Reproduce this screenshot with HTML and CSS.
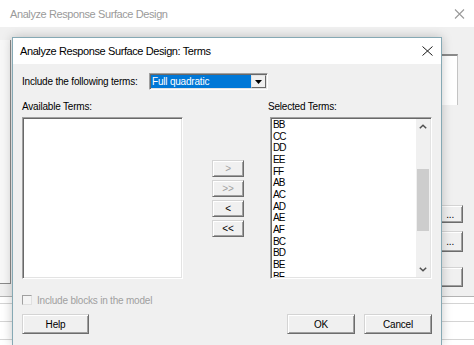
FILE: index.html
```html
<!DOCTYPE html>
<html lang="en">
<head>
  <meta charset="UTF-8">
  <title>Analyze Response Surface Design: Terms</title>
  <link rel="stylesheet" href="styles.css">
</head>
<body>
  <!-- outer dialog, mostly hidden behind the Terms dialog -->
  <div class="win">
    <div class="win-title">
      <span>Analyze Response Surface Design</span>
      <svg width="11" height="10" viewBox="0 0 11 10"><path d="M1 0.5 L10 9.5 M10 0.5 L1 9.5" stroke="#9a9a9a" stroke-width="1.1" fill="none"/></svg>
    </div>
    <div class="win-body">
      <div class="outer-list"></div>
      <div class="outer-side">
        <div class="outer-box"></div>
        <button class="btn outer-btn first">...</button>
        <button class="btn outer-btn second">...</button>
        <button class="btn outer-btn third"></button>
      </div>
    </div>
    <div class="sheet">
      <div class="sheet-row"></div>
      <div class="sheet-row"></div>
      <div class="sheet-row"></div>
    </div>
  </div>

  <div class="dlg">
    <div class="dlg-title">
      <span>Analyze Response Surface Design: Terms</span>
      <svg width="11" height="10" viewBox="0 0 11 10"><path d="M0.5 0.5 L10.5 9.5 M10.5 0.5 L0.5 9.5" stroke="#1a1a1a" stroke-width="1" fill="none"/></svg>
    </div>
    <div class="dlg-body">
      <div class="terms-row">
        <label>Include the following terms:</label>
        <div class="combo">
          <div class="combo-value">Full quadratic</div>
          <div class="combo-btn">
            <svg width="7" height="4" viewBox="0 0 7 4"><path d="M0 0 H7 L3.5 4 Z" fill="#000"/></svg>
          </div>
        </div>
      </div>

      <div class="lists">
        <div class="list-label">Available Terms:</div>
        <div></div>
        <div class="list-label sel">Selected Terms:</div>

        <div class="listbox"></div>

        <div class="movers">
          <button class="btn mover off">&gt;</button>
          <button class="btn mover off">&gt;&gt;</button>
          <button class="btn mover">&lt;</button>
          <button class="btn mover">&lt;&lt;</button>
        </div>

        <div class="listbox selected">
          <div class="items">
            <div>BB</div>
            <div>CC</div>
            <div>DD</div>
            <div>EE</div>
            <div>FF</div>
            <div>AB</div>
            <div>AC</div>
            <div>AD</div>
            <div>AE</div>
            <div>AF</div>
            <div>BC</div>
            <div>BD</div>
            <div>BE</div>
            <div>BF</div>
          </div>
          <div class="sb">
            <div class="sb-arrow">
              <svg width="8" height="5" viewBox="0 0 8 5"><path d="M0.8 4.3 L4 1.2 L7.2 4.3" stroke="#505050" stroke-width="1.5" fill="none"/></svg>
            </div>
            <div class="sb-track"><div class="sb-thumb"></div></div>
            <div class="sb-arrow">
              <svg width="8" height="5" viewBox="0 0 8 5"><path d="M0.8 0.7 L4 3.8 L7.2 0.7" stroke="#505050" stroke-width="1.5" fill="none"/></svg>
            </div>
          </div>
        </div>
      </div>

      <div class="chk-row">
        <span class="chk"></span>
        <span>Include blocks in the model</span>
      </div>

      <div class="btn-row">
        <button class="btn push">Help</button>
        <button class="btn push ok">OK</button>
        <button class="btn push cancel">Cancel</button>
      </div>
    </div>
  </div>
</body>
</html>
```

FILE: styles.css
```css
body { margin: 0; width: 474px; height: 345px; overflow: hidden; position: relative; background: #f0f0f0; font-family: "Liberation Sans", Arial, sans-serif; }
button { font-family: inherit; font-size: 10px; letter-spacing: -0.2px; padding: 0; margin: 0; color: #000; }

/* outer window */
.win-title { height: 27px; background: #fff; display: flex; align-items: center; justify-content: space-between; padding: 0 9px 0 10px; color: #9a9a9a; font-size: 11px; letter-spacing: -0.4px; }
.win-body { height: 269px; display: flex; justify-content: space-between; padding-right: 11px; }
.outer-list { width: 10px; margin-top: 13px; height: 243px; background: #f7f7f7; border-right: 1px solid #8a8a8a; border-bottom: 1px solid #8a8a8a; }
.outer-side { width: 63px; display: flex; flex-direction: column; }
.outer-box { margin-top: 27px; width: 57px; height: 49px; background: #fff; border-top: 2px solid #8a8a8a; border-right: 1px solid #c4c4c4; }
.outer-btn { text-align: right; padding-right: 8px; }
.outer-btn.first { margin-top: 100px; height: 18px; }
.outer-btn.second { margin-top: 8px; height: 21px; }
.outer-btn.third { margin-top: 15px; height: 20px; }
.sheet { background: #fff; border-top: 1px solid #b4b4b4; height: 48px; }
.sheet-row { height: 17px; border-bottom: 1px solid #d4d4d4; }
.sheet-row:first-child { height: 6px; }

/* shared 3d button */
.btn { box-sizing: border-box; background: #f0f0f0; border: 1px solid; border-color: #d4d4d4 #6d6d6d #6d6d6d #d4d4d4; box-shadow: inset 1px 1px #fff, inset -1px -1px #a0a0a0; }

/* terms dialog, runs off the bottom of the shot */
.dlg { position: absolute; left: 12px; top: 37px; width: 428px; height: 307px; background: #f0f0f0; border: 1px solid #86a9b4; border-bottom: none; box-shadow: 0 0 10px rgba(0, 0, 0, 0.22); }
.dlg-title { height: 26px; background: #fff; display: flex; align-items: center; justify-content: space-between; padding: 0 8px 0 7px; font-size: 11px; letter-spacing: -0.4px; color: #000; }
.dlg-body { padding: 9px 9px 0 9px; font-size: 10px; letter-spacing: -0.2px; color: #000; }

.terms-row { display: flex; align-items: center; height: 17px; }
.terms-row label { width: 127px; }
.combo { box-sizing: border-box; width: 119px; height: 17px; display: flex; padding: 1px; background: #fff; border: 1px solid; border-color: #a0a0a0 #fff #fff #a0a0a0; box-shadow: inset 1px 1px #696969, inset -1px -1px #e3e3e3; }
.combo-value { flex: 1; background: #0078d7; color: #fff; padding-left: 1px; line-height: 13px; }
.combo-btn { box-sizing: border-box; width: 15px; display: flex; align-items: center; justify-content: center; background: #f0f0f0; border: 1px solid; border-color: #e3e3e3 #696969 #696969 #e3e3e3; }

.lists { display: grid; grid-template-columns: 161px 87px 162px; grid-template-rows: 12px 162px; row-gap: 4px; margin-top: 11px; }
.list-label { line-height: 12px; }
.list-label.sel { margin-left: -2px; }
.listbox { box-sizing: border-box; height: 162px; background: #fff; border: 1px solid; border-color: #a0a0a0 #fff #fff #a0a0a0; box-shadow: inset 1px 1px #696969, inset -1px -1px #e3e3e3; }
.listbox.selected { display: flex; padding: 1px 1px 1px 0; }
.items { flex: 1; overflow: hidden; padding: 0 0 0 2px; font-size: 10px; line-height: 11.67px; letter-spacing: -1px; }
.sb { width: 14px; display: flex; flex-direction: column; background: #f0f0f0; }
.sb-arrow { height: 15px; display: flex; align-items: center; justify-content: center; }
.sb-track { flex: 1; }
.sb-thumb { margin: 35px 1px 0 1px; height: 62px; background: #cdcdcd; }

.movers { display: flex; flex-direction: column; gap: 3px; padding: 43px 0 0 29px; }
.mover { width: 32px; height: 17px; font-size: 10px; }
.mover.off { color: #a0a0a0; }

.chk-row { display: flex; align-items: center; gap: 5px; height: 10px; margin-top: 16px; color: #a0a0a0; }
.chk { box-sizing: border-box; width: 10px; height: 10px; background: #f4f4f4; border: 1px solid; border-color: #a0a0a0 #e0e0e0 #e0e0e0 #a0a0a0; }

.btn-row { display: flex; margin-top: 9px; }
.push { width: 68px; height: 20px; }
.push:first-child { width: 67px; }
.ok { margin-left: auto; }
.cancel { margin-left: 9px; }
```
